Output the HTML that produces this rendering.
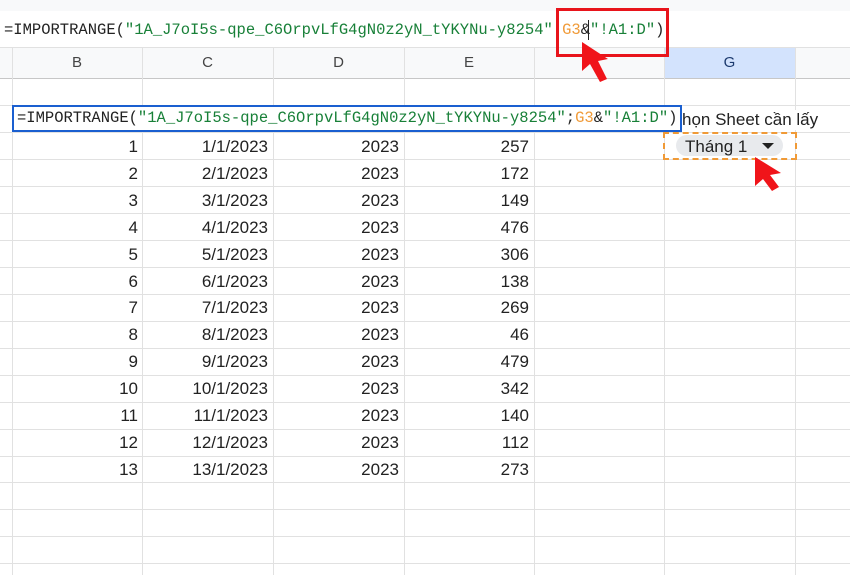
<!DOCTYPE html>
<html><head><meta charset="utf-8"><style>
body{margin:0;width:850px;height:575px;overflow:hidden;background:#fff;position:relative;font-family:"Liberation Sans",sans-serif}
.a{position:absolute}
.mono{font-family:"Liberation Mono",monospace;font-size:15.5px;white-space:nowrap;color:#222}
.g{color:#188038}.o{color:#f09a37}
.hl{position:absolute;left:0;width:850px;height:1px;background:#e1e1e1}
.vl{position:absolute;top:47px;width:1px;height:528px;background:#e1e1e1}
.n{position:absolute;font-size:17px;color:#222;text-align:right;width:120px}
.h{position:absolute;top:47px;height:31px;line-height:31px;text-align:center;font-size:15px;color:#444}
</style></head><body>
<div class="a" style="left:0;top:0;width:850px;height:11px;background:#f8f9fa"></div>
<div class="a mono" style="left:4px;top:21px">=IMPORTRANGE(<span class="g">"1A_J7oI5s-qpe_C6OrpvLfG4gN0z2yN_tYKYNu-y8254"</span> <span class="o">G3</span>&amp;<span class="g">"!A1:D"</span>)</div>
<div class="a" style="left:588px;top:20px;width:1px;height:20px;background:#222"></div>
<div class="a" style="left:0;top:47px;width:850px;height:31px;background:#f8f9fa"></div>
<div class="a" style="left:664px;top:47px;width:131px;height:31px;background:#d3e3fd"></div>
<div class="hl" style="top:47px"></div><div class="hl" style="top:78px;background:#c7c7c7"></div>
<div class="hl" style="top:105px"></div><div class="hl" style="top:132px"></div>
<div class="hl" style="top:159px"></div><div class="hl" style="top:186px"></div><div class="hl" style="top:213px"></div><div class="hl" style="top:240px"></div><div class="hl" style="top:267px"></div><div class="hl" style="top:294px"></div><div class="hl" style="top:321px"></div><div class="hl" style="top:348px"></div><div class="hl" style="top:375px"></div><div class="hl" style="top:402px"></div><div class="hl" style="top:429px"></div><div class="hl" style="top:456px"></div><div class="hl" style="top:482px"></div><div class="hl" style="top:509px"></div><div class="hl" style="top:536px"></div><div class="hl" style="top:563px"></div>
<div class="vl" style="left:12px"></div><div class="vl" style="left:142px"></div><div class="vl" style="left:273px"></div><div class="vl" style="left:404px"></div><div class="vl" style="left:534px"></div><div class="vl" style="left:664px"></div><div class="vl" style="left:795px"></div>
<div class="h" style="left:12px;width:130px">B</div><div class="h" style="left:142px;width:131px">C</div><div class="h" style="left:273px;width:131px">D</div><div class="h" style="left:404px;width:130px">E</div><div class="h" style="left:664px;width:131px;color:#1c3a6e">G</div>
<div class="a" style="left:682px;top:110px;font-size:17px;color:#222;background:#fff;width:168px">họn Sheet cần lấy</div>
<div class="a" style="left:12px;top:105px;width:666px;height:23px;border:2px solid #1a5fd0;background:#fff"></div>
<div class="a mono" style="left:17px;top:109px">=IMPORTRANGE(<span class="g">"1A_J7oI5s-qpe_C6OrpvLfG4gN0z2yN_tYKYNu-y8254"</span>;<span class="o">G3</span>&amp;<span class="g">"!A1:D"</span>)</div>
<div id="rows"></div>
<div class="a" style="left:663px;top:132px;width:130px;height:24px;border:2px dashed #f09a37"></div>
<div class="a" style="left:676px;top:135px;width:107px;height:21px;border-radius:11px;background:#e8eaed"></div>
<div class="a" style="left:685px;top:137px;font-size:17px;color:#222">Tháng 1</div>
<div class="a" style="left:762px;top:143px;width:0;height:0;border-left:6px solid transparent;border-right:6px solid transparent;border-top:6px solid #222"></div>
<div class="a" style="left:556px;top:8px;width:107px;height:43px;border:3px solid #e8141b"></div>
<svg class="a" style="left:0;top:0" width="850" height="575">
<polygon points="582,42 582,71 590,64 600,82 607,79 598,61 608,59" fill="#f0141a"/>
<polygon points="755,157 755,186 763,179 772,191 779,187 770,175 781,173" fill="#f0141a"/>
</svg>
<script>
var d=[["1","1/1/2023","257"],["2","2/1/2023","172"],["3","3/1/2023","149"],["4","4/1/2023","476"],["5","5/1/2023","306"],["6","6/1/2023","138"],["7","7/1/2023","269"],["8","8/1/2023","46"],["9","9/1/2023","479"],["10","10/1/2023","342"],["11","11/1/2023","140"],["12","12/1/2023","112"],["13","13/1/2023","273"]];
var h="";d.forEach(function(r,i){var t=137+i*26.9;
h+='<div class="n" style="left:18px;top:'+t+'px">'+r[0]+'</div><div class="n" style="left:148px;top:'+t+'px">'+r[1]+'</div><div class="n" style="left:279px;top:'+t+'px">2023</div><div class="n" style="left:409px;top:'+t+'px">'+r[2]+'</div>';});
document.getElementById("rows").innerHTML=h;
</script>
</body></html>
